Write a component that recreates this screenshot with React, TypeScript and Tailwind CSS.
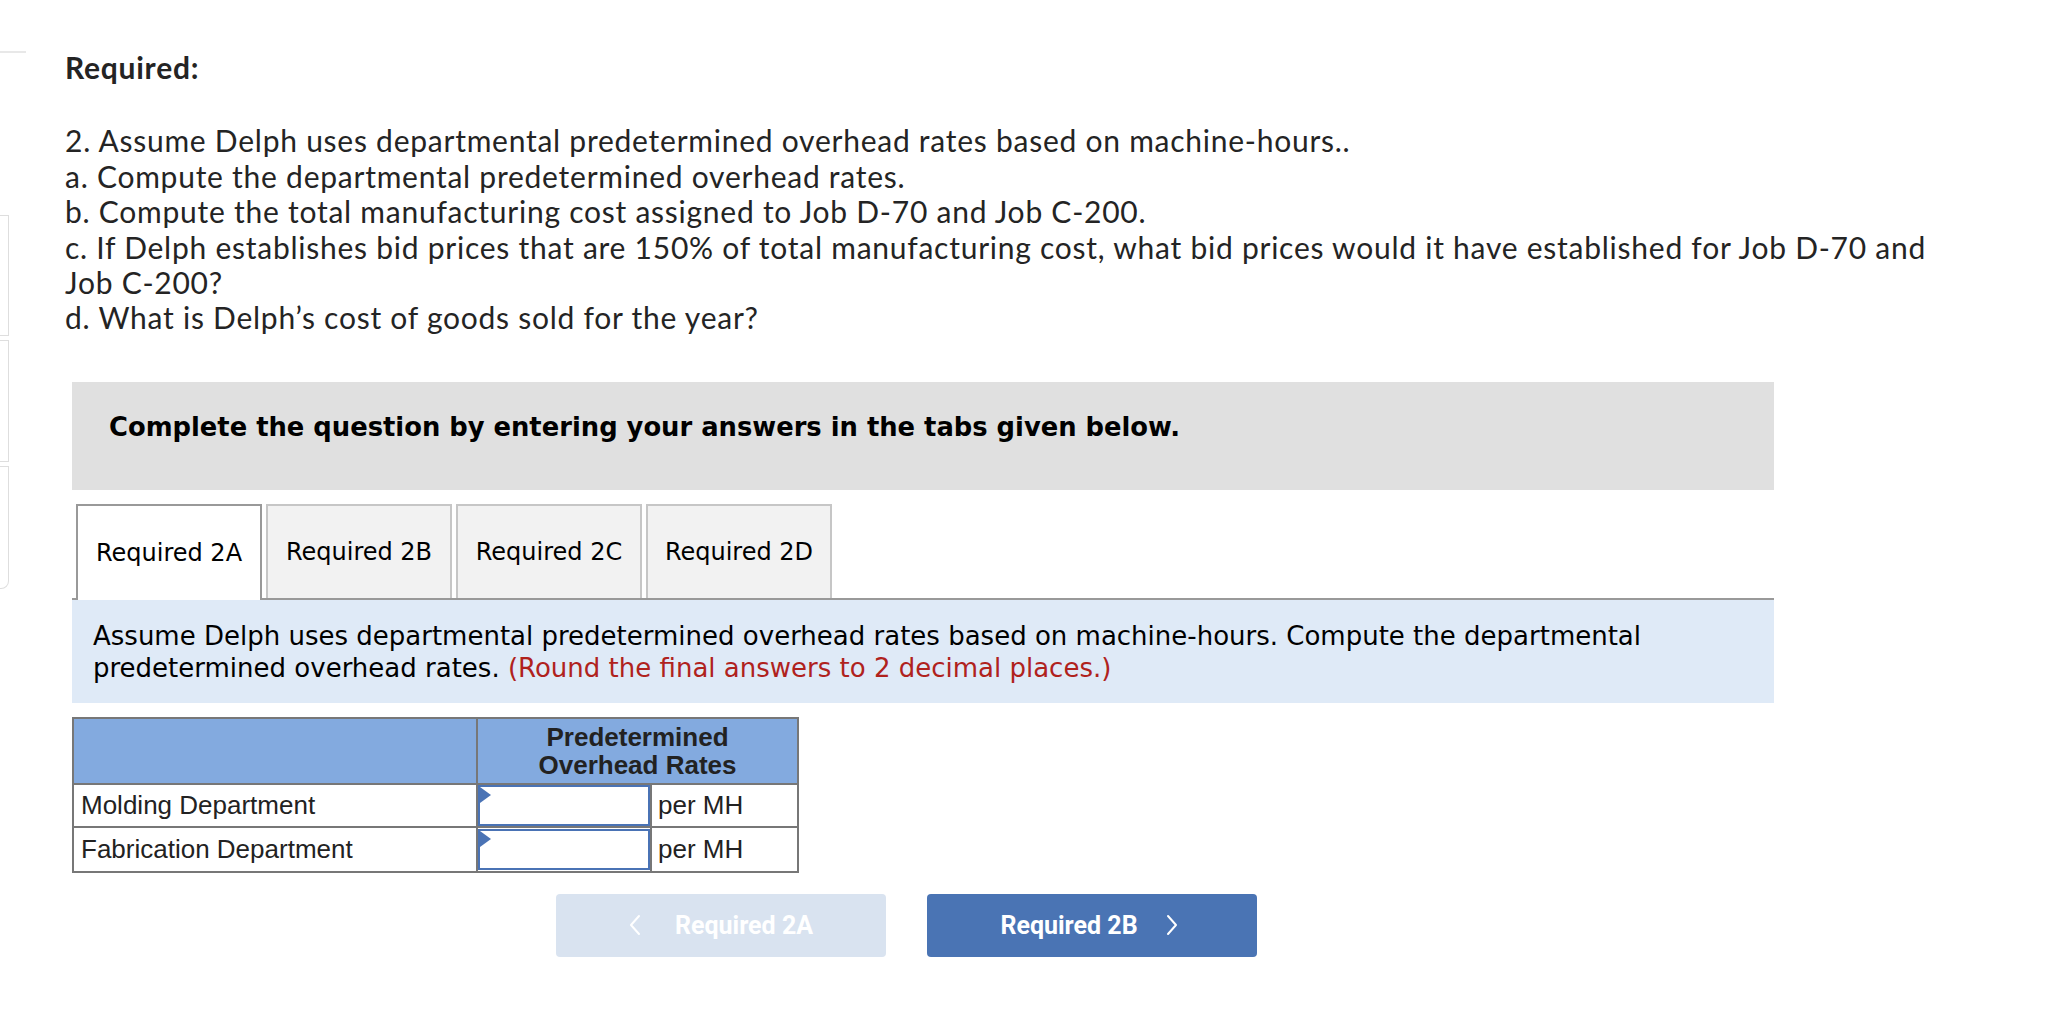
import React from "react";

const tabs = ["Required 2A", "Required 2B", "Required 2C", "Required 2D"];
const rows = ["Molding Department", "Fabrication Department"];

const Flag = () => (
  <svg className="absolute left-0 top-0" width="12" height="17" viewBox="0 0 12 17">
    <path d="M0 0 L11 8 L0 16 Z" fill="#4a73b5" />
  </svg>
);

const Chevron = ({ dir }: { dir: "left" | "right" }) => (
  <svg width="12" height="22" viewBox="0 0 12 22" fill="none">
    <path
      d={dir === "left" ? "M10 2 L2 11 L10 20" : "M2 2 L10 11 L2 20"}
      stroke="white"
      strokeWidth="2"
      strokeLinecap="round"
      strokeLinejoin="round"
    />
  </svg>
);

const App = () => {
  return (
    <div className="flex min-h-screen bg-white">
      {/* clipped sidebar on the left */}
      <div className="flex w-[26px] flex-col">
        <div className="mt-[51px] h-[2px] w-[26px] bg-[#e8e8e8]"></div>
        <div className="mt-[162px] flex w-[9px] flex-col gap-[4px]">
          <div className="h-[121px] border border-l-0 border-[#dedede]"></div>
          <div className="h-[122px] border border-l-0 border-[#dedede]"></div>
          <div className="h-[123px] rounded-br-[8px] border border-l-0 border-[#dedede]"></div>
        </div>
      </div>

      <div className="pl-[39px] pt-[50px]">
        <div className="font-['Lato',sans-serif] text-[30px] leading-[35.4px] tracking-[0.75px] text-[#242424]">
          <p className="font-bold">Required:</p>
          <div className="mt-[38px] whitespace-nowrap">
            <p>2. Assume Delph uses departmental predetermined overhead rates based on machine-hours..</p>
            <p>a. Compute the departmental predetermined overhead rates.</p>
            <p>b. Compute the total manufacturing cost assigned to Job D-70 and Job C-200.</p>
            <p>
              c. If Delph establishes bid prices that are 150% of total manufacturing cost, what bid prices would it have established for Job D-70 and
              <br />
              Job C-200?
            </p>
            <p>d. What is Delph’s cost of goods sold for the year?</p>
          </div>
        </div>

        <div className="ml-[7px] w-[1702px] font-['DejaVu_Sans',sans-serif]">
          <div className="mt-[46px] h-[108px] bg-[#e0e0e0] pl-[37px] pt-[30px] text-[25.8px] font-bold leading-[30px] text-black">
            Complete the question by entering your answers in the tabs given below.
          </div>

          <div className="mt-[14px] flex gap-[4px] border-b-2 border-[#999] pl-[4px]">
            {tabs.map((t, i) => (
              <div
                key={t}
                className={
                  i === 0
                    ? "-mb-[2px] flex h-[96px] w-[186px] items-center justify-center border-2 border-b-0 border-[#999] bg-white text-[24px] text-black"
                    : "flex h-[94px] w-[186px] items-center justify-center border-2 border-b-0 border-[#c6c6c6] bg-[#f2f2f2] text-[24px] text-black"
                }
              >
                {t}
              </div>
            ))}
          </div>

          <div className="h-[103px] bg-[#dfeaf7] px-[21px] pt-[20px] text-[26px] leading-[32px] text-black">
            <p>Assume Delph uses departmental predetermined overhead rates based on machine-hours. Compute the departmental</p>
            <p>
              predetermined overhead rates.{" "}
              <span className="text-[#b0221d]">(Round the final answers to 2 decimal places.)</span>
            </p>
          </div>

          <table className="mt-[14px] w-[725px] table-fixed border-collapse border-2 border-[#777] font-['Liberation_Sans',Arial,sans-serif] text-[26px] text-[#222]">
            <colgroup>
              <col className="w-[404px]" />
              <col className="w-[174px]" />
              <col className="w-[147px]" />
            </colgroup>
            <thead>
              <tr className="h-[66px] bg-[#83aadf]">
                <th className="border-2 border-[#777]"></th>
                <th colSpan={2} className="border-2 border-[#777] text-center font-bold leading-[28px]">
                  Predetermined
                  <br />
                  Overhead Rates
                </th>
              </tr>
            </thead>
            <tbody>
              {rows.map((r, i) => (
                <tr key={r} className={i === 0 ? "h-[43px]" : "h-[45px]"}>
                  <td className="border-2 border-[#777] pl-[7px] leading-[30px]">{r}</td>
                  <td className="border-2 border-[#777] p-0">
                    <div className="relative h-full min-h-[41px] border-2 border-[#4a73b5] bg-white">
                      <Flag />
                    </div>
                  </td>
                  <td className="border-2 border-[#777] pl-[6px] leading-[30px]">per MH</td>
                </tr>
              ))}
            </tbody>
          </table>

          <div className="ml-[484px] mt-[21px] flex gap-[41px] font-['Roboto',sans-serif] text-[25px] font-bold text-white">
            <button className="flex h-[63px] w-[330px] items-center justify-center gap-[34px] rounded-[4px] bg-[#d9e3f0]">
              <Chevron dir="left" />
              <span>Required 2A</span>
            </button>
            <button className="flex h-[63px] w-[330px] items-center justify-center gap-[28px] rounded-[4px] bg-[#4a74b4]">
              <span className="-ml-[6px]">Required 2B</span>
              <Chevron dir="right" />
            </button>
          </div>
        </div>
      </div>
    </div>
  );
};

export default App;
